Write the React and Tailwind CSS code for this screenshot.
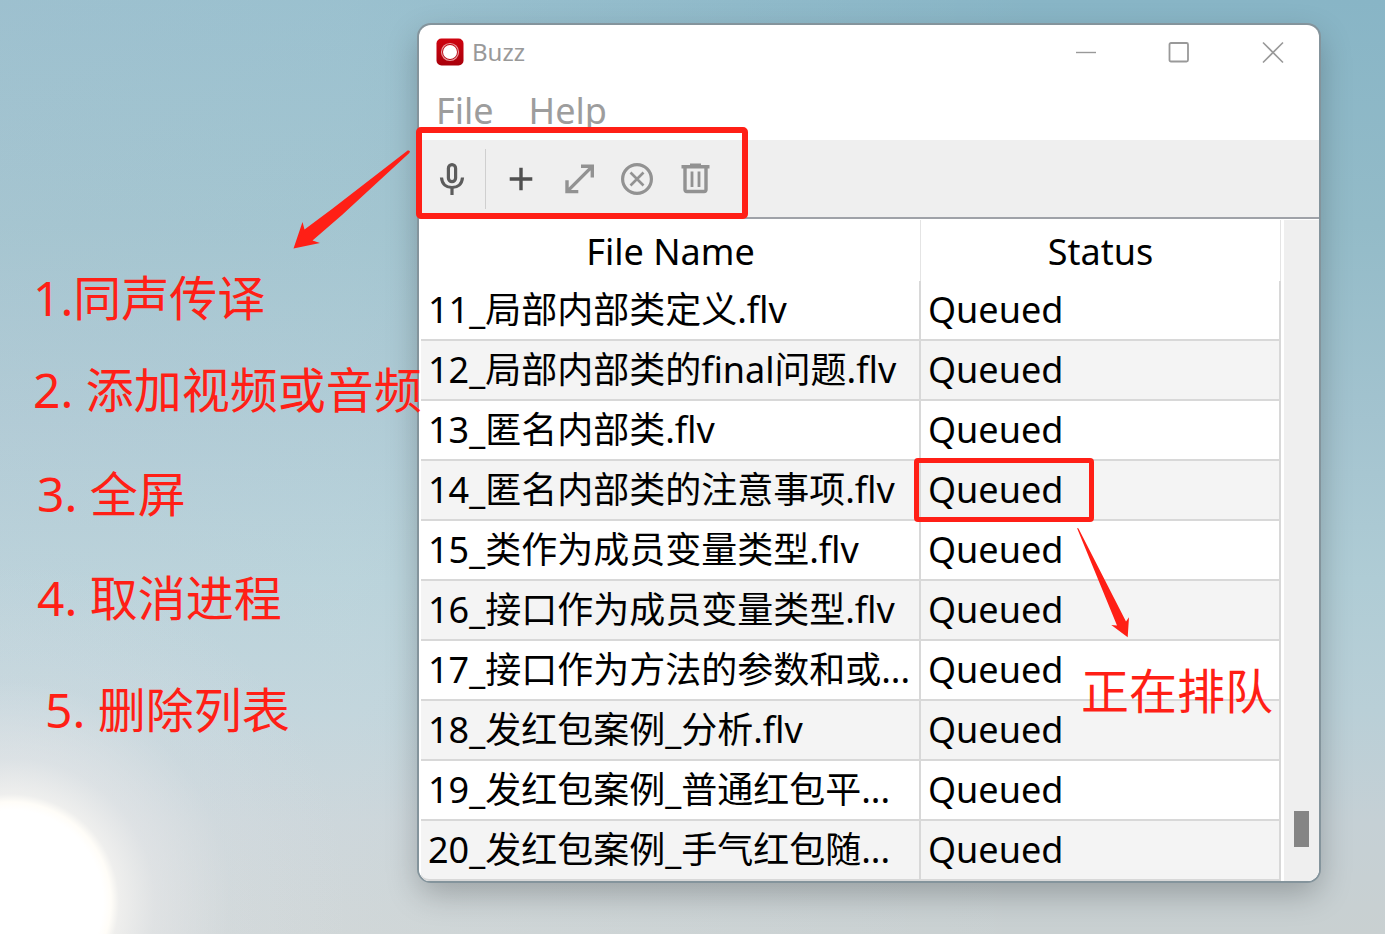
import { useState } from 'react';

// Datos
const files = [
  { name: '11_局部内部类定义.flv', status: 'Queued' },
  { name: '12_局部内部类的final问题.flv', status: 'Queued' },
  { name: '13_匿名内部类.flv', status: 'Queued' },
  { name: '14_匿名内部类的注意事项.flv', status: 'Queued', marked: true },
  { name: '15_类作为成员变量类型.flv', status: 'Queued' },
  { name: '16_接口作为成员变量类型.flv', status: 'Queued' },
  { name: '17_接口作为方法的参数和或...', status: 'Queued', note: '正在排队' },
  { name: '18_发红包案例_分析.flv', status: 'Queued' },
  { name: '19_发红包案例_普通红包平...', status: 'Queued' },
  { name: '20_发红包案例_手气红包随...', status: 'Queued' },
];

// Notas
function Notes() {
  return (
    <div className="relative z-20 w-[419px] shrink-0 whitespace-nowrap pt-[270px] pl-[33px] text-[48px] leading-[56px] text-[#ff1f16]">
      <svg className="absolute left-[290px] top-[145px]" width="124" height="108" viewBox="290 145 124 108" fill="currentColor">
        <path d="M408 150.300 L410 151.300 L409.300 153 L342 215 L312.500 240.500 L320 243 L293.500 248.500 L302.500 222 L304.500 229.500 L332 209 Z" />
      </svg>
      <p>1.同声传译</p>
      <p className="mt-9">2. 添加视频或音频</p>
      <p className="mt-12 pl-1">3. 全屏</p>
      <p className="mt-12 pl-1">4. 取消进程</p>
      <p className="mt-14 pl-3">5. 删除列表</p>
    </div>
  );
}

function TitleBar() {
  return (
    <header className="flex h-[54px] items-center pl-[17px] pr-[34px] text-[#999999]">
      <svg width="28" height="28" viewBox="0 0 28 28">
        <defs>
          <linearGradient id="logo" x1="0" y1="0" x2="0" y2="1">
            <stop offset="0" stopColor="#cf0410" />
            <stop offset="1" stopColor="#a8000b" />
          </linearGradient>
        </defs>
        <rect x="0.5" y="0.5" width="27" height="27" rx="5" fill="url(#logo)" />
        <circle cx="14" cy="14" r="8.500" fill="none" stroke="#e99a9e" strokeWidth="1.200" />
        <circle cx="14" cy="14" r="7" fill="#fff" />
      </svg>
      <h1 className="ml-2 flex-1 text-[24px] leading-8">Buzz</h1>
      <div className="flex gap-[70px]">
        <button aria-label="Minimize">
          <svg width="24" height="24" viewBox="0 0 24 24" fill="none" stroke="currentColor" strokeWidth="1.400">
            <path d="M3 12.500h20" />
          </svg>
        </button>
        <button aria-label="Maximize">
          <svg width="24" height="24" viewBox="0 0 24 24" fill="none" stroke="currentColor" strokeWidth="1.800">
            <rect x="2.500" y="3" width="18.500" height="18.500" rx="1.500" />
          </svg>
        </button>
        <button aria-label="Close">
          <svg width="24" height="24" viewBox="0 0 24 24" fill="none" stroke="currentColor" strokeWidth="1.600">
            <path d="M2 2.500l20 20M22 2.500l-20 20" />
          </svg>
        </button>
      </div>
    </header>
  );
}

function Toolbar() {
  return (
    <div className="relative flex h-[77px] items-center bg-[#efefef] pl-4 pt-px text-[#929292]">
      <button aria-label="Record" className="text-[#5c5c5c]">
        <svg width="34" height="34" viewBox="0 0 34 34" fill="none" stroke="currentColor" strokeWidth="3.200">
          <rect x="13.400" y="2.600" width="7.200" height="17" rx="3.600" />
          <path d="M6.500 15.500c.5 7 5 10 10.500 10s10-3 10.500-10M17 25.500v7.500" />
        </svg>
      </button>
      <div className="mx-4 h-[60px] w-px bg-[#cfcfcf]" />
      <div className="flex gap-6 pl-[2px]">
        <button aria-label="Add file" className="text-[#505050]">
          <svg width="34" height="34" viewBox="0 0 34 34" fill="none" stroke="currentColor" strokeWidth="3.400">
            <path d="M17 5.700v22.600M5.700 17h22.600" />
          </svg>
        </button>
        <button aria-label="Open">
          <svg width="34" height="34" viewBox="0 0 34 34" fill="none" stroke="currentColor" strokeWidth="3.400">
            <path d="M19 4.300h11.300v11.300M30 4.600L5 29.600M5 18.300v11.300h11.300" />
          </svg>
        </button>
        <button aria-label="Cancel">
          <svg width="34" height="34" viewBox="0 0 34 34" fill="none" stroke="currentColor" strokeWidth="3.200">
            <circle cx="17" cy="17" r="14.400" />
            <path d="M10.500 10.500l13 13M23.500 10.500l-13 13" strokeWidth="2.600" />
          </svg>
        </button>
        <button aria-label="Delete">
          <svg width="34" height="34" viewBox="0 0 34 34" fill="none" stroke="currentColor" strokeWidth="3.400">
            <path d="M3.500 4.800h28M12 3.200h11" />
            <path d="M7 5v22.500q0 2 2 2h17q2 0 2-2v-22.500" />
            <path d="M14 9.500v15.500M21 9.500v15.500" strokeWidth="2.800" />
          </svg>
        </button>
      </div>
      <div className="absolute -left-[3px] -top-[13px] z-10 h-[92px] w-[332px] rounded-[5px] border-6 border-[#ff1f16]" />
    </div>
  );
}

function FileTable({ selected, onSelect }) {
  return (
    <table className="min-w-0 flex-1 table-fixed border-separate border-spacing-0 text-[36px] leading-[48px] text-black">
      <thead>
        <tr className="h-[61px]">
          <th className="w-[500px] border-r border-[#e4e4e4] p-0 pt-[2px] font-normal">File Name</th>
          <th className="border-r border-[#e4e4e4] p-0 pt-[2px] font-normal">Status</th>
        </tr>
      </thead>
      <tbody>
        {files.map((file) => (
          <tr
            key={file.name}
            onClick={() => onSelect(file.name)}
            aria-selected={selected === file.name}
            className="group h-[60px] odd:bg-white even:bg-[#f4f4f4]"
          >
            <td className="whitespace-nowrap border-b-2 border-r-2 border-[#d8d8d8] p-0 pl-[7px] group-last:rounded-bl-lg">{file.name}</td>
            <td className="relative whitespace-nowrap border-b-2 border-r-2 border-[#d8d8d8] p-0 pl-[7px]">
              {file.status}
              {file.marked && (
                <>
                  <span className="absolute -left-[7px] -top-[3px] h-16 w-[180px] rounded-[4px] border-5 border-[#ff1f16]" />
                  <svg className="absolute left-[154px] top-[65px] z-10 text-[#ff1f16]" width="60" height="114" viewBox="1075 525 60 114" fill="currentColor">
                    <path d="M1077 527 L1078.500 527.500 L1126 620.500 L1129 616.300 L1127.700 636.300 L1111.300 624 L1117 624.500 Z" />
                  </svg>
                </>
              )}
              {file.note && (
                <span className="absolute left-[160px] top-[22px] z-10 text-[48px] leading-[56px] text-[#ff1f16]">{file.note}</span>
              )}
            </td>
          </tr>
        ))}
      </tbody>
    </table>
  );
}

function App() {
  const [selected, setSelected] = useState('');

  return (
    <div className="relative flex min-h-screen items-start overflow-hidden bg-[linear-gradient(180deg,#88b5c6_0%,#93bbc8_24%,#a3c3cf_45%,#afccd5_62%,#b9cfd7_76%,#c5d0d5_88%,#c9d0d1_100%)] font-['Noto_Sans','Noto_Sans_CJK_SC',sans-serif]">
      {/* Cielo mas claro a la izquierda */}
      <div className="absolute inset-0 bg-[linear-gradient(90deg,#e8e8ee38_0%,#f4f8fa2c_25%,#ffffff00_75%)]" />
      {/* Sol */}
      <div className="absolute -bottom-[368px] -left-[389px] size-[800px] rounded-full bg-[radial-gradient(closest-side,#ffffff_23%,#fffdf8_25%,#f3f2f0e0_27%,#ebebec90_36%,#dfe5e830_55%,#dfe5e800_85%)]" />

      <Notes />

      <main className="relative z-10 mt-[25px] mr-[66px] min-w-0 flex-1 rounded-xl bg-white shadow-[0_0_0_2px_#84949c,0_12px_32px_#00000040]">
        <TitleBar />
        <nav className="flex h-[61px] items-end gap-[35px] pl-[17px] text-[36px] leading-[58px] text-[#9d9d9d]">
          <button>File</button>
          <button>Help</button>
        </nav>
        <Toolbar />
        <div className="border-t-2 border-[#9fa2a8] bg-white" />
        <div className="flex rounded-b-xl bg-white pl-[2px] pt-px">
          <FileTable selected={selected} onSelect={setSelected} />
          <div className="ml-[3px] flex w-[35px] items-end justify-center rounded-br-xl bg-[#efefef] pb-[34px]">
            <div className="h-9 w-[15px] bg-[#858585]" />
          </div>
        </div>
      </main>
    </div>
  );
}

export default App;
